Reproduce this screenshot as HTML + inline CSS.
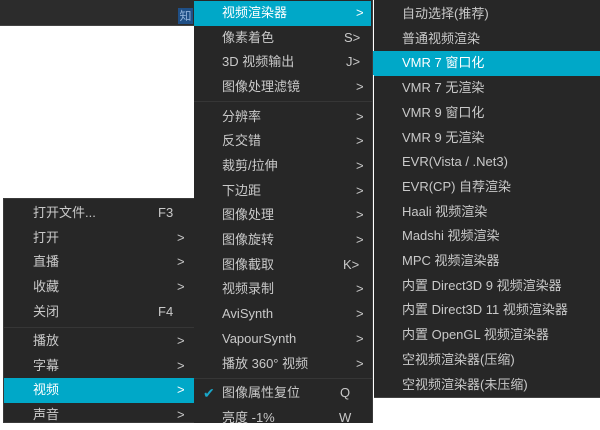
<!DOCTYPE html>
<html><head><meta charset="utf-8"><style>
*{margin:0;padding:0;box-sizing:border-box}
body{width:600px;height:423px;overflow:hidden;background:#fff;position:relative;font-family:"Liberation Sans","Noto Sans CJK SC",sans-serif;font-size:13px;color:#c9c9c9}
.m{position:absolute;background:#272727}
.r{position:absolute;left:0;right:0;height:24.7px;line-height:24.7px;white-space:nowrap}
.r span{position:absolute}
.h{background:#00a8c8;color:#fff}
.sep{position:absolute;left:0;right:0;height:1px;background:#363636}
</style></head><body>
<div style="position:absolute;left:0;top:0;width:194px;height:26px;background:#2c2c2c;border-bottom:1px solid #444"></div>
<div style="position:absolute;left:178px;top:8px;width:15px;height:16px;background:#1f4f86;color:#8fb0d8;font-size:12px;line-height:16px;text-align:center">知</div>

<div class="m" style="left:3px;top:198px;width:191px;height:225px;border:1px solid #3a3a3a;border-right:none">
<div class="r" style="top:2px"><span style="left:29px">打开文件...</span><span style="left:154px">F3</span></div>
<div class="r" style="top:26.7px"><span style="left:29px">打开</span><span style="left:173px">&gt;</span></div>
<div class="r" style="top:51.4px"><span style="left:29px">直播</span><span style="left:173px">&gt;</span></div>
<div class="r" style="top:76.1px"><span style="left:29px">收藏</span><span style="left:173px">&gt;</span></div>
<div class="r" style="top:100.8px"><span style="left:29px">关闭</span><span style="left:154px">F4</span></div>
<div class="sep" style="top:128px"></div>
<div class="r" style="top:130px"><span style="left:29px">播放</span><span style="left:173px">&gt;</span></div>
<div class="r" style="top:154.7px"><span style="left:29px">字幕</span><span style="left:173px">&gt;</span></div>
<div class="r h" style="top:179.4px"><span style="left:29px">视频</span><span style="left:173px">&gt;</span></div>
<div class="r" style="top:204.1px"><span style="left:29px">声音</span><span style="left:173px">&gt;</span></div>
</div>

<div class="m" style="left:194px;top:0;width:179px;height:423px;border-right:1px solid #3a3a3a">
<div class="r h" style="top:1px;right:1px"><span style="left:28px">视频渲染器</span><span style="left:162px">&gt;</span></div>
<div class="r" style="top:25.7px"><span style="left:28px">像素着色</span><span style="left:150px">S&gt;</span></div>
<div class="r" style="top:50.4px"><span style="left:28px">3D 视频输出</span><span style="left:152px">J&gt;</span></div>
<div class="r" style="top:75.1px"><span style="left:28px">图像处理滤镜</span><span style="left:162px">&gt;</span></div>
<div class="sep" style="top:101px"></div>
<div class="r" style="top:104.5px"><span style="left:28px">分辨率</span><span style="left:162px">&gt;</span></div>
<div class="r" style="top:129.2px"><span style="left:28px">反交错</span><span style="left:162px">&gt;</span></div>
<div class="r" style="top:153.9px"><span style="left:28px">裁剪/拉伸</span><span style="left:162px">&gt;</span></div>
<div class="r" style="top:178.6px"><span style="left:28px">下边距</span><span style="left:162px">&gt;</span></div>
<div class="r" style="top:203.3px"><span style="left:28px">图像处理</span><span style="left:162px">&gt;</span></div>
<div class="r" style="top:228px"><span style="left:28px">图像旋转</span><span style="left:162px">&gt;</span></div>
<div class="r" style="top:252.7px"><span style="left:28px">图像截取</span><span style="left:149px">K&gt;</span></div>
<div class="r" style="top:277.4px"><span style="left:28px">视频录制</span><span style="left:162px">&gt;</span></div>
<div class="r" style="top:302.1px"><span style="left:28px">AviSynth</span><span style="left:162px">&gt;</span></div>
<div class="r" style="top:326.8px"><span style="left:28px">VapourSynth</span><span style="left:162px">&gt;</span></div>
<div class="r" style="top:351.5px"><span style="left:28px">播放 360° 视频</span><span style="left:162px">&gt;</span></div>
<div class="sep" style="top:378px"></div>
<div class="r" style="top:381px"><span style="left:9px;color:#1aa6c8;font-size:14px">✔</span><span style="left:28px">图像属性复位</span><span style="left:146px">Q</span></div>
<div class="r" style="top:405.7px"><span style="left:28px">亮度 -1%</span><span style="left:145px">W</span></div>
</div>
<div style="position:absolute;left:373px;top:51px;width:2px;height:24px;background:#00a8c8"></div>

<div class="m" style="left:374px;top:0;width:226px;height:398px;border-bottom:1px solid #444">
<div class="r" style="top:2px"><span style="left:28px">自动选择(推荐)</span></div>
<div class="r" style="top:26.7px"><span style="left:28px">普通视频渲染</span></div>
<div class="r h" style="top:51px"><span style="left:28px">VMR 7 窗口化</span></div>
<div class="r" style="top:76.1px"><span style="left:28px">VMR 7 无渲染</span></div>
<div class="r" style="top:100.8px"><span style="left:28px">VMR 9 窗口化</span></div>
<div class="r" style="top:125.5px"><span style="left:28px">VMR 9 无渲染</span></div>
<div class="r" style="top:150.2px"><span style="left:28px">EVR(Vista / .Net3)</span></div>
<div class="r" style="top:174.9px"><span style="left:28px">EVR(CP) 自荐渲染</span></div>
<div class="r" style="top:199.6px"><span style="left:28px">Haali 视频渲染</span></div>
<div class="r" style="top:224.3px"><span style="left:28px">Madshi 视频渲染</span></div>
<div class="r" style="top:249px"><span style="left:28px">MPC 视频渲染器</span></div>
<div class="r" style="top:273.7px"><span style="left:28px">内置 Direct3D 9 视频渲染器</span></div>
<div class="r" style="top:298.4px"><span style="left:28px">内置 Direct3D 11 视频渲染器</span></div>
<div class="r" style="top:323.1px"><span style="left:28px">内置 OpenGL 视频渲染器</span></div>
<div class="r" style="top:347.8px"><span style="left:28px">空视频渲染器(压缩)</span></div>
<div class="r" style="top:372.5px"><span style="left:28px">空视频渲染器(未压缩)</span></div>
</div>
</body></html>
